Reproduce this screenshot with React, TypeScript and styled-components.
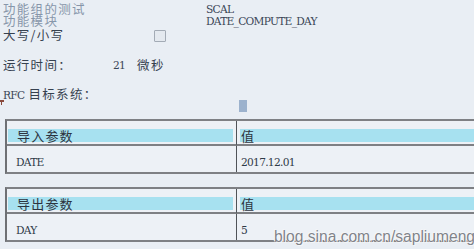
import React from "react";
import styled, { createGlobalStyle } from "styled-components";

const GlobalStyle = createGlobalStyle`
  html, body {
    margin: 0;
    padding: 0;
    background: #e9eef4;
  }
  body {
    font-family: "Noto Sans CJK SC", "Liberation Sans", sans-serif;
    color: #2c3440;
  }
`;

const CJK = `"Noto Sans CJK SC", sans-serif`;
const LATIN = `"DejaVu Serif", "Noto Sans CJK SC", serif`;

const Page = styled.div`
  position: relative;
  width: 474px;
  height: 249px;
  overflow: hidden;
  background: #e9eef4;
`;

const InfoBlock = styled.div`
  display: flex;
  flex-direction: column;
  padding: 3px 0 0 3px;
`;

const InfoRow = styled.div<{ $h: number }>`
  display: grid;
  grid-template-columns: 203px auto;
  height: ${(p) => p.$h}px;
  align-items: center;
`;

const Label = styled.span<{ $muted?: boolean }>`
  display: block;
  font-family: ${CJK};
  font-size: 12.5px;
  letter-spacing: 1.3px;
  line-height: 12px;
  height: 12px;
  white-space: nowrap;
  color: ${(p) => (p.$muted ? "#8796aa" : "#36414f")};
`;

const Mono = styled.span`
  font-family: ${LATIN};
  font-stretch: condensed;
  font-size: 11.8px;
  letter-spacing: -0.7px;
  line-height: 12px;
  white-space: nowrap;
  color: #3a4556;
`;

const CheckRow = styled.div`
  display: grid;
  grid-template-columns: 151px 12px;
  height: 16px;
  align-items: center;
`;

const CheckBox = styled.span`
  box-sizing: border-box;
  width: 12px;
  height: 12px;
  margin-top: 2px;
  border: 1px solid #a3abb5;
  border-radius: 1px;
  background: #e4e9ef;
`;

const StatRow = styled.div<{ $top: number; $h: number }>`
  display: grid;
  grid-template-columns: 110px auto;
  align-items: center;
  padding-left: 3px;
  margin-top: ${(p) => p.$top}px;
  height: ${(p) => p.$h}px;
`;

const StatValue = styled.span`
  display: flex;
  align-items: center;
  gap: 12px;
`;

const CursorRow = styled.div`
  display: flex;
  height: 13px;
`;

const RedMark = styled.span`
  position: relative;
  width: 4px;
  height: 4px;
  border-top: 2px solid #8a4a3c;
  box-sizing: border-box;
  &::after {
    content: "";
    position: absolute;
    left: 1px;
    top: 0;
    width: 1px;
    height: 3px;
    background: #8a4a3c;
  }
`;

const BlueCaret = styled.span`
  width: 8px;
  height: 12px;
  margin-left: 235px;
  background: #9cb2cd;
`;

const Table = styled.div<{ $top: number }>`
  display: grid;
  grid-template-columns: 230px 1fr;
  margin: ${(p) => p.$top}px 0 0 5px;
  width: 480px;
  border-top: 2px solid #7e8084;
  border-bottom: 2px solid #7e8084;
  border-left: 2px solid #6e7074;
  background: #edf1f6;
`;

const HeadCell = styled.div<{ $first?: boolean }>`
  height: 25px;
  box-sizing: border-box;
  padding: 8px ${(p) => (p.$first ? "3px" : "0")} 4px ${(p) => (p.$first ? "1px" : "3px")};
  border-right: ${(p) => (p.$first ? "1px solid #4f5358" : "none")};
  border-bottom: 2px solid #7e8084;
`;

const Band = styled.div<{ $pad: number }>`
  height: 13px;
  background: #a7e1f0;
  display: flex;
  align-items: center;
  padding-left: ${(p) => p.$pad}px;
  font-family: ${CJK};
  font-size: 13px;
  letter-spacing: 1.2px;
  color: #2c3440;
  white-space: nowrap;
`;

const DataCell = styled.div<{ $first?: boolean }>`
  height: 26px;
  box-sizing: border-box;
  padding: 9px 0 0 ${(p) => (p.$first ? "9px" : "4px")};
  border-right: ${(p) => (p.$first ? "1px solid #4f5358" : "none")};
  font-family: ${LATIN};
  font-stretch: condensed;
  font-size: 11.8px;
  letter-spacing: -0.7px;
  line-height: 14px;
  color: #2f3a48;
`;

const Watermark = styled.div`
  position: absolute;
  right: -1px;
  bottom: 4px;
  height: 16px;
  font-family: "Liberation Sans", Arial, sans-serif;
  font-size: 15.6px;
  line-height: 16px;
  color: #80838a;
  text-shadow: 0 0 1px #fff, 0 0 1px #fff, 1px 1px 0 #f4f6f8, -1px -1px 0 #f4f6f8;
  white-space: nowrap;
`;

type Param = { title: string; name: string; value: string };

const ParamTable: React.FC<{ p: Param; top: number }> = ({ p, top }) => (
  <Table $top={top}>
    <HeadCell $first>
      <Band $pad={9}>{p.title}</Band>
    </HeadCell>
    <HeadCell>
      <Band $pad={1}>值</Band>
    </HeadCell>
    <DataCell $first>{p.name}</DataCell>
    <DataCell>{p.value}</DataCell>
  </Table>
);

export default function App() {
  return (
    <Page>
      <GlobalStyle />
      <InfoBlock>
        <InfoRow $h={12}>
          <Label $muted>功能组的测试</Label>
          <Mono>SCAL</Mono>
        </InfoRow>
        <InfoRow $h={12}>
          <Label $muted>功能模块</Label>
          <Mono>DATE_COMPUTE_DAY</Mono>
        </InfoRow>
        <CheckRow>
          <Label>大写/小写</Label>
          <CheckBox />
        </CheckRow>
      </InfoBlock>
      <StatRow $top={14} $h={16}>
        <Label>运行时间：</Label>
        <StatValue>
          <Mono>21</Mono>
          <Label>微秒</Label>
        </StatValue>
      </StatRow>
      <StatRow $top={14} $h={13}>
        <Label>
          <Mono>RFC</Mono> 目标系统：
        </Label>
      </StatRow>
      <CursorRow>
        <RedMark />
        <BlueCaret />
      </CursorRow>
      <ParamTable top={6} p={{ title: "导入参数", name: "DATE", value: "2017.12.01" }} />
      <ParamTable top={13} p={{ title: "导出参数", name: "DAY", value: "5" }} />
      <Watermark>blog.sina.com.cn/sapliumeng</Watermark>
    </Page>
  );
}
